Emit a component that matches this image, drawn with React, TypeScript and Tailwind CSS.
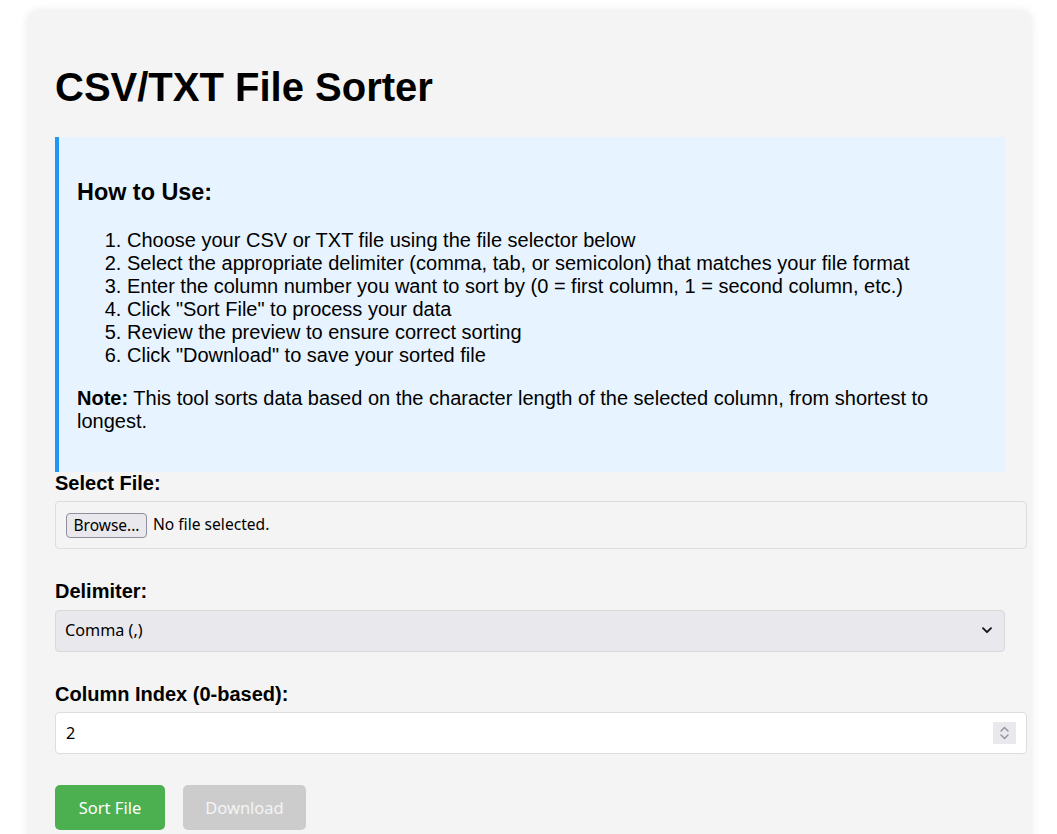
import React from "react";

const sys = { fontFamily: '"Noto Sans", "Open Sans", sans-serif' };

export default function App() {
  return (
    <div
      className="min-h-[834px] bg-white pt-[11px] pl-[28px] text-black"
      style={{ fontFamily: '"Liberation Sans", Arial, sans-serif' }}
    >
      <div className="w-[1003px] rounded-[10px] bg-[#f4f4f4] pl-[27px] pr-[26px] pt-[26px] pb-[30px] shadow-[0_0_10px_rgba(0,0,0,0.1)]">
        <h1 className="my-[26.8px] text-[40px] font-bold leading-[46px]">CSV/TXT File Sorter</h1>

        <div className="border-l-[4px] border-[#2196F3] bg-[#e7f3fe] py-[18.75px] pl-[18px] pr-[18.75px]">
          <h3 className="my-[23.4px] text-[23.4px] font-bold leading-[27px]">How to Use:</h3>
          <ol className="my-[20px] list-decimal pl-[50px] text-[20px] leading-[23px]">
            <li>Choose your CSV or TXT file using the file selector below</li>
            <li>Select the appropriate delimiter (comma, tab, or semicolon) that matches your file format</li>
            <li>Enter the column number you want to sort by (0 = first column, 1 = second column, etc.)</li>
            <li>Click "Sort File" to process your data</li>
            <li>Review the preview to ensure correct sorting</li>
            <li>Click "Download" to save your sorted file</li>
          </ol>
          <p className="my-[20px] text-[20px] leading-[23px]">
            <strong>Note:</strong> This tool sorts data based on the character length of the selected column, from shortest to longest.
          </p>
        </div>

        <div className="mb-[31.25px]">
          <div className="mb-[6.25px] text-[20px] font-bold leading-[23px]">Select File:</div>
          <div className="flex h-[48px] w-[972px] items-center gap-[6px] rounded-[4px] border border-[#dddddd] bg-[#f4f4f4] px-[10px]">
            <div
              className="flex h-[25px] w-[81px] items-center justify-center rounded-[4px] border border-[#8f8f9d] bg-[#e9e9ed] text-[15.5px] text-black"
              style={sys}
            >
              Browse...
            </div>
            <span className="text-[15.6px] text-black" style={sys}>No file selected.</span>
          </div>
        </div>

        <div className="mb-[31.25px]">
          <div className="mb-[6.25px] text-[20px] font-bold leading-[23px]">Delimiter:</div>
          <div className="flex h-[42px] w-[950px] items-center justify-between rounded-[4px] border border-[#d8d8d8] bg-[#e9e8ed] pl-[9px] pr-[12px]">
            <span className="text-[16.2px] text-black" style={sys}>Comma (,)</span>
            <svg width="10" height="7" viewBox="0 0 10 7" fill="none">
              <path d="M1 1.2 L5 5.2 L9 1.2" stroke="#111" strokeWidth="1.8" strokeLinecap="round" strokeLinejoin="round" />
            </svg>
          </div>
        </div>

        <div className="mb-[31.25px]">
          <div className="mb-[6.25px] text-[20px] font-bold leading-[23px]">Column Index (0-based):</div>
          <div className="flex h-[42px] w-[972px] items-center justify-between rounded-[4px] border border-[#dddddd] bg-white pl-[10px] pr-[10px]">
            <span className="text-[16.2px] text-black" style={sys}>2</span>
            <div className="flex h-[22px] w-[23px] flex-col items-center justify-center gap-[2px] bg-[#e9e9ed]">
              <svg width="9" height="6" viewBox="0 0 9 6" fill="none">
                <path d="M1 5 L4.5 1.5 L8 5" stroke="#8f8f9d" strokeWidth="1.4" strokeLinecap="round" strokeLinejoin="round" />
              </svg>
              <svg width="9" height="6" viewBox="0 0 9 6" fill="none">
                <path d="M1 1 L4.5 4.5 L8 1" stroke="#8f8f9d" strokeWidth="1.4" strokeLinecap="round" strokeLinejoin="round" />
              </svg>
            </div>
          </div>
        </div>

        <div className="flex gap-[18px]">
          <div
            className="flex h-[45px] w-[110px] items-center justify-center rounded-[5px] bg-[#4CAF50] text-[16.5px] text-white"
            style={sys}
          >
            Sort File
          </div>
          <div
            className="flex h-[45px] w-[123px] items-center justify-center rounded-[5px] bg-[#cccccc] text-[16.5px] text-[#f4f4f4]"
            style={sys}
          >
            Download
          </div>
        </div>
      </div>
    </div>
  );
}
